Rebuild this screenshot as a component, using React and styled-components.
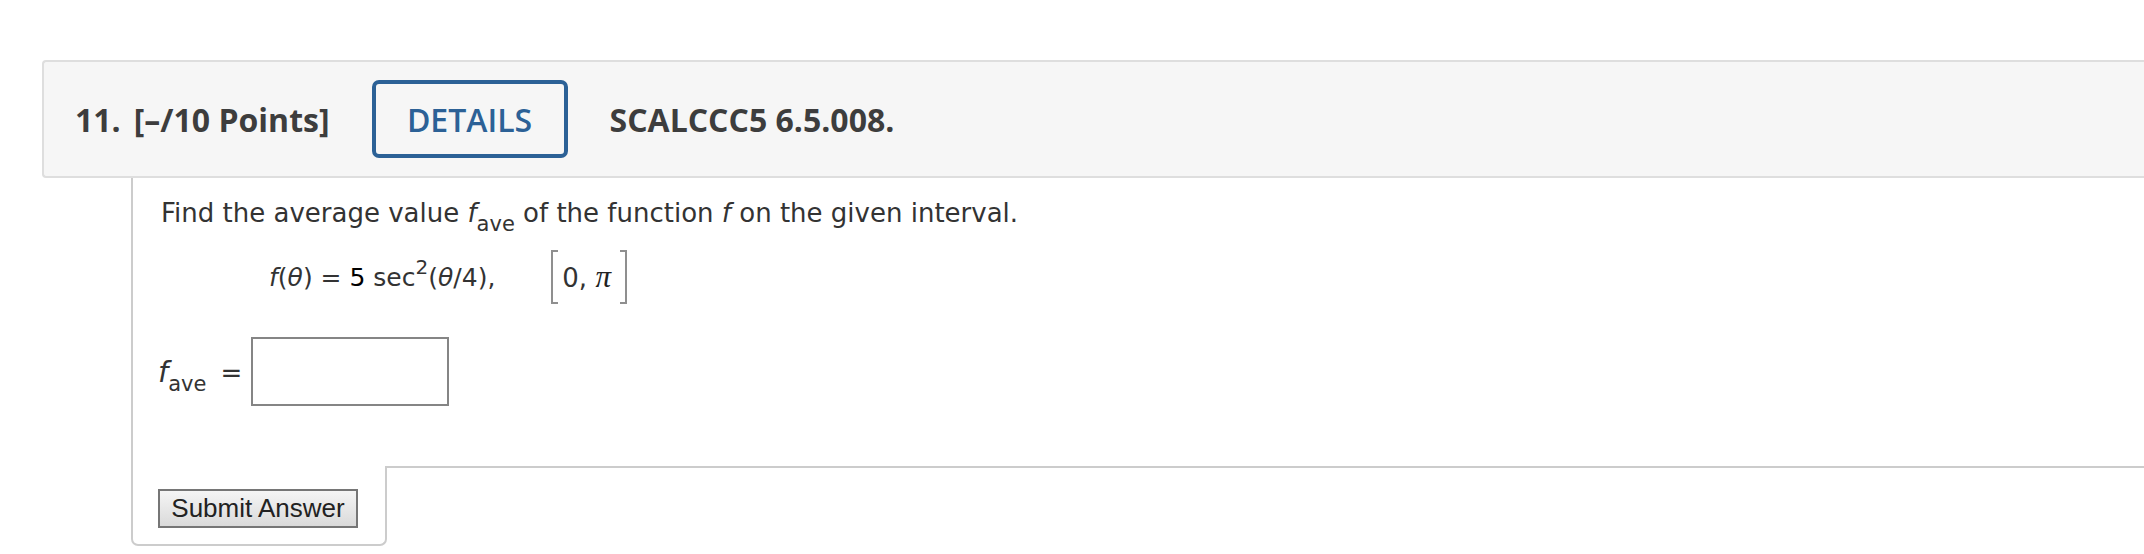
import React from "react";
import styled, { createGlobalStyle } from "styled-components";

const Global = createGlobalStyle`
  html, body { margin: 0; padding: 0; background: #fff; overflow: hidden; }
  body { width: 2144px; height: 554px; }
`;

const Page = styled.div`
  padding: 60px 0 0 42px;
`;

const Header = styled.div`
  box-sizing: border-box;
  display: flex;
  align-items: center;
  height: 118px;
  width: calc(100% + 40px);
  padding-left: 31px;
  background: #f6f6f6;
  border: 2px solid #dedede;
  border-right: none;
  border-radius: 4px 0 0 4px;
  font-family: "Open Sans", "DejaVu Sans", sans-serif;
  font-size: 32px;
  font-weight: 700;
  color: #3d3d3d;
`;

const QNum = styled.span`
  margin-right: 13px;
`;

const Points = styled.span`
  margin-right: 42px;
`;

const DetailsButton = styled.div`
  box-sizing: border-box;
  display: flex;
  align-items: center;
  justify-content: center;
  width: 196px;
  height: 78px;
  border: 4px solid #2c6196;
  border-radius: 7px;
  color: #2c6196;
  font-weight: 600;
  margin-right: 42px;
`;

const Ref = styled.span``;

const Body = styled.div`
  margin-left: 89px;
  border-left: 2px solid #cccccc;
  padding: 18px 0 60px 28px;
  font-family: "DejaVu Sans", Verdana, sans-serif;
  font-size: 26px;
  color: #333;
`;

const Para = styled.p`
  margin: 0;
  line-height: 34px;
  white-space: nowrap;
`;

const Ital = styled.i`
  font-style: italic;
`;

const BigF = styled.i`
  font-style: italic;
  font-size: 29px;
`;

const Sub = styled.sub`
  font-size: 21px;
  vertical-align: -9px;
  line-height: 0;
`;

const Sup = styled.sup`
  font-size: 20px;
  vertical-align: 12px;
  line-height: 0;
`;

const Formula = styled.div`
  display: flex;
  align-items: center;
  margin: 20px 0 0 108px;
  height: 54px;
  white-space: nowrap;
  font-size: 25px;
`;

const Black = styled.span`
  color: #000;
`;

const Interval = styled.span`
  display: inline-flex;
  align-items: center;
  margin-left: 56px;
  height: 54px;
`;

const Bracket = styled.span`
  box-sizing: border-box;
  width: 7px;
  height: 54px;
  border: 2px solid #8f8f8f;
  ${(p) => (p.$right ? "border-left: none;" : "border-right: none;")}
`;

const IntervalBody = styled.span`
  padding: 0 9px 0 4px;
  font-size: 26px;
`;

const Pi = styled.span`
  font-family: "Liberation Serif", serif;
  font-style: italic;
  font-size: 31px;
  color: #222;
`;

const AnswerRow = styled.div`
  display: flex;
  align-items: center;
  margin-top: 33px;
  margin-left: -3px;
`;

const Label = styled.span`
  display: inline-block;
  white-space: nowrap;
  margin-right: 9px;
`;

const Eq = styled.span`
  margin-left: 14px;
`;

const Input = styled.div`
  box-sizing: border-box;
  width: 198px;
  height: 69px;
  border: 2px solid #858585;
  background: #fff;
`;

const Footer = styled.div`
  display: flex;
  margin-left: 89px;
`;

const Tab = styled.div`
  box-sizing: border-box;
  width: 256px;
  height: 80px;
  padding: 23px 0 0 25px;
  border: 2px solid #cccccc;
  border-top: none;
  border-radius: 0 0 7px 7px;
`;

const Rest = styled.div`
  flex: 1;
  border-top: 2px solid #cccccc;
`;

const SubmitButton = styled.button`
  box-sizing: border-box;
  width: 200px;
  height: 39px;
  padding: 0;
  border: 2px solid #767676;
  border-radius: 0;
  background: linear-gradient(#f5f5f5, #dadada);
  font-family: "Liberation Sans", Arial, sans-serif;
  font-size: 26px;
  color: #222;
  line-height: 35px;
`;

export default function App() {
  return (
    <>
      <Global />
      <Page>
        <Header>
          <QNum>11.</QNum>
          <Points>[–/10 Points]</Points>
          <DetailsButton>DETAILS</DetailsButton>
          <Ref>SCALCCC5 6.5.008.</Ref>
        </Header>
        <Body>
          <Para>
            Find the average value <Ital>f</Ital>
            <Sub>ave</Sub> of the function <Ital>f</Ital> on the given interval.
          </Para>
          <Formula>
            <span>
              <Ital>f</Ital>(<Ital>θ</Ital>) = <Black>5</Black> sec<Sup>2</Sup>(<Ital>θ</Ital>/4),
            </span>
            <Interval>
              <Bracket />
              <IntervalBody>0, <Pi>π</Pi></IntervalBody>
              <Bracket $right />
            </Interval>
          </Formula>
          <AnswerRow>
            <Label>
              <BigF>f</BigF>
              <Sub>ave</Sub>
              <Eq>=</Eq>
            </Label>
            <Input />
          </AnswerRow>
        </Body>
        <Footer>
          <Tab>
            <SubmitButton>Submit Answer</SubmitButton>
          </Tab>
          <Rest />
        </Footer>
      </Page>
    </>
  );
}
